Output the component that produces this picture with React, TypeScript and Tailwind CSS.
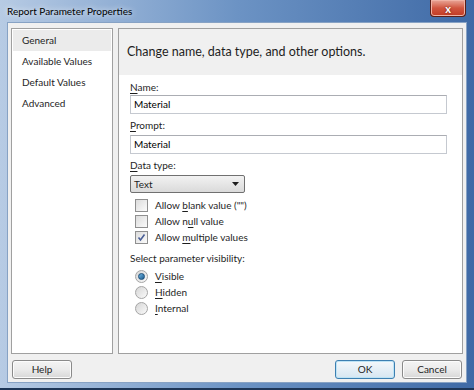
import { ReactNode } from 'react';

const ui = { fontFamily: 'Lato, "Open Sans", "DejaVu Sans", sans-serif' };

function Key({ children }: { children: ReactNode }) {
  return <span className="underline underline-offset-2 decoration-1">{children}</span>;
}

function TextBox({ value }: { value: string }) {
  return (
    <div className="h-[19px] w-[317px] border border-[#c5c9d0] border-t-[#abadb3] bg-white px-[3px] text-[10px] leading-[17px] text-black">
      {value}
    </div>
  );
}

function CheckBox({ checked, children }: { checked?: boolean; children: ReactNode }) {
  return (
    <div className="flex h-4 items-center gap-[7px] pl-[5px]">
      <div className="relative h-[13px] w-[13px] border border-[#8f8f8f] bg-gradient-to-br from-[#dcdcdc] to-[#fbfbfb]">
        {checked && (
          <svg viewBox="0 0 11 11" className="absolute inset-0 h-[11px] w-[11px]">
            <path d="M2.5 5.5 L4.5 8 L8.5 2.5" fill="none" stroke="#4a5f97" strokeWidth="1.6" />
          </svg>
        )}
      </div>
      <span className="text-[10px] text-[#1e1e1e]">{children}</span>
    </div>
  );
}

function Radio({ checked, children }: { checked?: boolean; children: ReactNode }) {
  return (
    <div className="flex h-4 items-center gap-[7px] pl-[5px]">
      <div className="flex h-[13px] w-[13px] items-center justify-center rounded-full border border-[#a5a5a5] bg-gradient-to-br from-[#d6d6d6] to-[#fafafa]">
        {checked && <div className="h-[7px] w-[7px] rounded-full border border-[#1a4d78] bg-gradient-to-br from-[#6fb6e4] to-[#1d5d8f]" />}
      </div>
      <span className="text-[10px] text-[#1e1e1e]">{children}</span>
    </div>
  );
}

function Button({ children, primary, className }: { children: ReactNode; primary?: boolean; className?: string }) {
  return (
    <div
      className={`flex h-[19px] w-[60px] items-center justify-center rounded-[3px] border text-[10px] text-[#1e1e1e] ${
        primary
          ? 'border-[#3c7fb1] bg-gradient-to-b from-[#f4f8fb] to-[#d6e6f1] shadow-[inset_0_0_0_1px_#bde3f5]'
          : 'border-[#8a8a8a] bg-gradient-to-b from-[#f4f4f4] via-[#ebebeb] to-[#d7d7d7] shadow-[inset_0_0_0_1px_#fcfcfc]'
      } ${className ?? ''}`}
    >
      {children}
    </div>
  );
}

export default function App() {
  const nav = ['General', 'Available Values', 'Default Values', 'Advanced'];
  return (
    <div style={ui} className="flex h-[390px] w-[474px] flex-col bg-gradient-to-r from-[#b7cbe4] via-[#6c93c4] to-[#3f6aa6] shadow-[inset_0_-2px_0_#1d3556]">
      {/* Title bar */}
      <div className="relative flex h-[22px] shrink-0 items-center pl-[7px]">
        <span className="text-[10px] text-black [text-shadow:0_0_6px_#ffffff]">Report Parameter Properties</span>
        <div className="absolute right-[8px] top-0 flex h-[17px] w-[36px] items-center justify-center rounded-b-[4px] border border-t-0 border-[#5b1f17] bg-gradient-to-b from-[#e8a698] via-[#d0553f] to-[#c23a22] shadow-[inset_0_0_0_1px_#f0b2a4]">
          <span className="text-[11px] font-bold leading-none text-white [text-shadow:0_0_2px_#5b1f17]">x</span>
        </div>
      </div>

      {/* Client area */}
      <div className="mx-[7px] flex flex-1 flex-col border border-[#87a2c4] bg-[#f0f0f0] px-[3px] pt-[5px]">
        <div className="flex h-[326px] gap-[5px]">
          {/* Nav */}
          <div className="w-[102px] border border-[#a0a0a0] bg-white p-px">
            {nav.map((n, i) => (
              <div
                key={n}
                className={`flex h-[21px] items-center pl-[9px] text-[10px] text-[#1e1e1e] ${i === 0 ? 'bg-[#ebebeb]' : ''}`}
              >
                {n}
              </div>
            ))}
          </div>

          {/* Right panel */}
          <div className="flex flex-1 flex-col border border-[#a0a0a0] bg-white">
            <div className="flex h-[46px] items-center bg-[#f0f0f0] pl-[8px]">
              <span className="text-[12.5px] text-[#1e1e1e]">Change name, data type, and other options.</span>
            </div>
            <div className="flex flex-col pl-[11px] pt-[5px] text-[10px] text-[#1e1e1e]">
              <div className="h-[15px]">
                <Key>N</Key>ame:
              </div>
              <TextBox value="Material" />
              <div className="mt-[4px] h-[17px]">
                <Key>P</Key>rompt:
              </div>
              <TextBox value="Material" />
              <div className="mt-[4px] h-[17px]">
                <Key>D</Key>ata type:
              </div>
              <div className="flex h-[18px] w-[115px] items-center justify-between rounded-[2px] border border-[#707070] bg-gradient-to-b from-[#f2f2f2] to-[#dadada] pl-[3px] pr-[5px]">
                <span>Text</span>
                <svg viewBox="0 0 7 4" className="h-[4px] w-[7px]">
                  <path d="M0 0 H7 L3.5 4 Z" fill="#1e1e1e" />
                </svg>
              </div>
              <div className="mt-[4px] flex flex-col">
                <CheckBox>
                  Allow <Key>b</Key>lank value ("")
                </CheckBox>
                <CheckBox>
                  Allow n<Key>u</Key>ll value
                </CheckBox>
                <CheckBox checked>
                  Allow <Key>m</Key>ultiple values
                </CheckBox>
              </div>
              <div className="mt-[5px] h-[17px] leading-[17px]">Select parameter visibility:</div>
              <div className="mt-[1px] flex flex-col">
                <Radio checked>
                  <Key>V</Key>isible
                </Radio>
                <Radio>
                  <Key>H</Key>idden
                </Radio>
                <Radio>
                  <Key>I</Key>nternal
                </Radio>
              </div>
            </div>
          </div>
        </div>

        {/* Buttons */}
        <div className="mt-[6px] flex items-center px-px">
          <Button>Help</Button>
          <div className="flex-1" />
          <Button primary>OK</Button>
          <Button className="ml-[7px]">Cancel</Button>
        </div>
      </div>
      <div className="h-[7px] shrink-0" />
    </div>
  );
}
